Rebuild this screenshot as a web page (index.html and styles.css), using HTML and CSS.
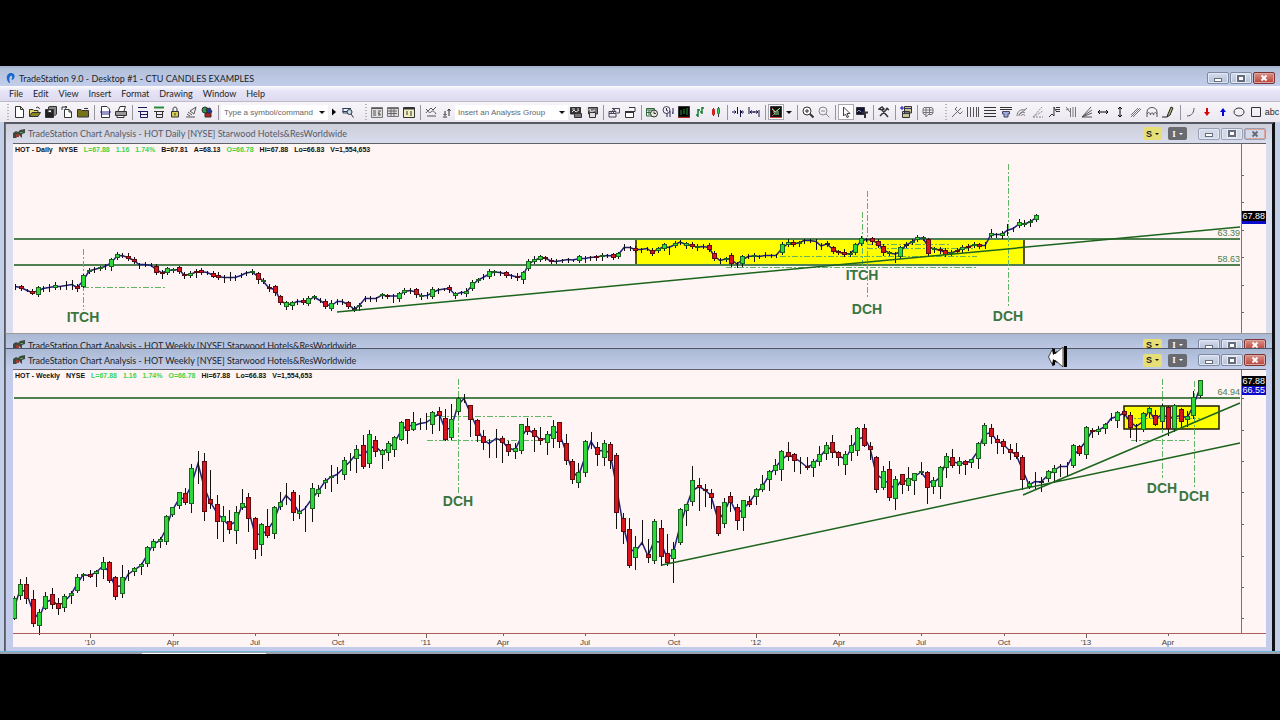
FILE: index.html
```html
<!DOCTYPE html>
<html lang="en">
<head>
    <meta charset="UTF-8">
    <meta name="viewport" content="width=device-width, initial-scale=1.0">
    <title>TradeStation 9.0 - Desktop #1 - CTU CANDLES EXAMPLES</title>
    <link rel="stylesheet" href="styles.css">
</head>
<body>
    <div class="app">
        <header class="titlebar">
            <svg class="logo" viewBox="0 0 10 12"><path d="M3 11C0 8 0 3 3 1.500C7 0 10 3 8 6.500C7 8 6 8 5.500 7.500C7 5 6 3 4.500 4C3 5 3 8 4 11Z" fill="#1668d0"/></svg>
            <h1>TradeStation 9.0 - Desktop #1 - CTU CANDLES EXAMPLES</h1>
            <div class="window-buttons">
                <button aria-label="Minimize"><i class="min"></i></button>
                <button aria-label="Maximize"><i class="max"></i></button>
                <button class="close" aria-label="Close"><svg viewBox="0 0 8 8"><path d="M1.500 1.500L6.500 6.500M6.500 1.500L1.500 6.500"/></svg></button>
            </div>
        </header>

        <nav class="menubar">
            <a href="#">File</a>
            <a href="#">Edit</a>
            <a href="#">View</a>
            <a href="#">Insert</a>
            <a href="#">Format</a>
            <a href="#">Drawing</a>
            <a href="#">Window</a>
            <a href="#">Help</a>
        </nav>

        <div class="toolbar">
            <div class="group">
                <span class="grip"></span>
                <button aria-label="New"><svg viewBox="0 0 12 12"><path d="M2.500 .5H7.500L10.500 3.500V11.500H2.500ZM7.500 .5V3.500H10.500" fill="#fff"/></svg></button>
                <button aria-label="Open"><svg viewBox="0 0 12 12"><path d="M.5 10.500V3.500H4L5 4.500H9V6" fill="#e6d860"/><path d="M.5 10.500L3 6.500H11.500L9 10.500Z" fill="#8a8420"/><path d="M7 2C8.500 .5 10 1 10.500 3"/></svg></button>
                <button aria-label="Save all"><svg viewBox="0 0 12 12"><path d="M3.500 3V1L5 .5H11.500V8L9.500 10" fill="#888"/><path d="M.5 3.500H8.500V11.500H.5Z" fill="#222"/><path d="M3 4V6.500H6.500V4Z" fill="#fff"/></svg></button>
                <button aria-label="New window"><svg viewBox="0 0 12 12"><path d="M3.500 3.500H8L10.500 6V11.500H3.500ZM8 3.500V6H10.500" fill="#fff"/><path d="M1 4V1H6M4 0L6 1L4 2.500"/></svg></button>
                <button aria-label="Close workspace"><svg viewBox="0 0 12 12"><path d="M.5 3.500H4L5 4.500H11.500V11H.5Z" fill="#77721a"/><path d="M7 2.500H11"/></svg></button>
                <span class="sep"></span>
                <button aria-label="Page setup"><svg viewBox="0 0 12 12"><path d="M2.500 .5H8L10.500 3V11.500H2.500Z" fill="#fff"/><path d="M1 6H12M2 8H11" stroke="#2a2a8a"/></svg></button>
                <button aria-label="Print"><svg viewBox="0 0 12 12"><path d="M3 5L5 .5H10.500L9 5" fill="#fff"/><path d="M.5 5.500H11.500V9.500H.5Z" fill="#999"/><path d="M2 9.500H9V11.500H2Z" fill="#fff"/></svg></button>
                <span class="sep"></span>
                <button aria-label="Insert chart"><svg viewBox="0 0 12 12"><path d="M1 1.500H10M1 5.500H11M3.500 6V11.500H10.500V6M4 8.500H10" stroke="#1a1a60"/></svg></button>
                <button aria-label="Insert grid"><svg viewBox="0 0 12 12"><path d="M1 1.500H11" stroke="#2b8c3a" stroke-width="2"/><path d="M1 5.500H11M3.500 6V11.500H9.500V6M4 8.500H9"/></svg></button>
                <button aria-label="Lock"><svg viewBox="0 0 12 12"><path d="M4 5V3C4 .5 8 .5 8 3V5"/><path d="M2.500 5.500H9.500V11H2.500Z" fill="#d9ce55"/><path d="M6 7V9.500"/></svg></button>
                <button aria-label="Format"><svg viewBox="0 0 12 12"><path d="M1 11H10M2 8L5 10M3 6L7 9M5 5L9 8L11 1Z" stroke="#555"/></svg></button>
                <button aria-label="Colors"><svg viewBox="0 0 12 12"><circle cx="4" cy="4" r="3" fill="#2c9c45"/><path d="M5 3L9 2L11 6L7 8Z" fill="#1c3aa0"/><path d="M4 7H10V11H4Z" fill="#b52020"/></svg></button>
                <span class="sep"></span>
                <div class="combo symbol">
                    <input type="text" placeholder="Type a symbol/command" aria-label="Symbol or command">
                    <i class="arrow"></i>
                </div>
                <button class="play" aria-label="Go"><svg viewBox="0 0 12 12"><path d="M4 2.500L8 6L4 9.500Z" fill="#000" stroke="none"/></svg></button>
                <button aria-label="Symbol lookup"><svg viewBox="0 0 12 12"><path d="M.5 2.500H9M.5 5.500H5M1 2V7H5" stroke="#2a3a60"/><circle cx="7.500" cy="6" r="2.500" fill="#bfe0ea"/><path d="M9 8L11.500 11.500"/></svg></button>
            </div>

            <div class="group">
                <span class="grip"></span>
                <button aria-label="Data window"><svg viewBox="0 0 12 12"><path d="M.5 1.500H11.500V11.500H.5Z" fill="#ddd" stroke="#777"/><path d="M1 2.500H11M2 5H5M2 7H5M2 9H5M7 5H10M7 7L10 9M8 10V6" stroke="#555"/></svg></button>
                <button aria-label="Time and sales"><svg viewBox="0 0 12 12"><path d="M.5 1.500H11.500V10.500H.5Z" fill="#ddd" stroke="#777"/><path d="M1 2.500H11M1 5H10M1 7.500H10M4 3V10M7 3V10" stroke="#666"/></svg></button>
                <button aria-label="Matrix"><svg viewBox="0 0 12 12"><path d="M.5 1.500H11.500V11.500H.5Z" fill="#f1efc0"/><path d="M1 2.500H11" stroke-width="2"/><path d="M3 6H5M3 8H5M8 5V10"/></svg></button>
                <span class="sep"></span>
                <button aria-label="Insert indicator"><svg viewBox="0 0 12 12"><path d="M1 3L3 5L6 2L8 4L11 1M1 7C3 3 4 8 6 6S9 5 11 8M2 10H11" stroke="#555"/></svg></button>
                <button aria-label="Sort"><svg viewBox="0 0 12 12"><path d="M4 5V9M2.500 8L4 9.500L5.500 8M8 10V3M6.500 5L8 3L9.500 5M2 11H6"/></svg></button>
                <div class="combo analysis">
                    <input type="text" placeholder="Insert an Analysis Group" aria-label="Analysis group">
                    <i class="arrow"></i>
                </div>
                <button aria-label="Save group"><svg viewBox="0 0 12 12"><path d="M.5 1.500H10.500V8H.5Z" fill="#333"/><path d="M2 3H5M7 3H9M2 6L4 4L6 6L9 4" stroke="#ddd"/><path d="M4.500 7.500H11.500V11.500H4.500Z" fill="#777"/></svg></button>
                <button aria-label="Edit group"><svg viewBox="0 0 12 12"><path d="M2.500 1.500H11.500V8H2.500Z" fill="#777"/><path d="M1 1V5L4 3L5 6L9 4" stroke="#ddd"/><path d="M3.500 6.500H9.500V11.500H3.500Z" fill="#ddd"/></svg></button>
                <span class="sep"></span>
                <button aria-label="Properties"><svg viewBox="0 0 12 12"><path d="M4 2.500H11.500V7H9M1 5.500H8V11H1ZM2 8L6 3L7 5L4 8M1 7.500H8" stroke="#445"/></svg></button>
                <button aria-label="Window properties"><svg viewBox="0 0 12 12"><path d="M5 1.500H11V5.500H9.500M1.500 5.500H9.500V11.500H1.500Z" fill="#fff"/><path d="M1 6H10" stroke-width="2"/></svg></button>
                <span class="sep"></span>
                <button aria-label="Session"><svg viewBox="0 0 12 12"><path d="M.5 2.500H8.500V10H.5ZM1 4H8M3 4V9M1 6.500H8" stroke="#2c6b3a"/><circle cx="8" cy="7.500" r="3.500" fill="#e2e8d8"/><path d="M8 5.500V7.500H10"/></svg></button>
                <button aria-label="Interval"><svg viewBox="0 0 12 12"><circle cx="4.500" cy="4" r="3.500" stroke="#445"/><path d="M4.500 2V4.500L6 5M5 7V11M8 5V11M11 2V8M10 7H11" stroke="#225"/></svg></button>
                <button aria-label="Bar style"><svg viewBox="0 0 12 12"><path d="M.5 .5H11.500V11H.5Z" fill="#000"/><path d="M3 4V9M6 3V8M9 2V9" stroke="#269a3b"/><path d="M0 11.500H12" stroke="#b22"/></svg></button>
                <button aria-label="OHLC bars"><svg viewBox="0 0 12 12"><path d="M4 3V11M2 9H4M4 4H6M8 1V8M6 6H8M8 2H10" stroke="#167c34" stroke-width="1.500"/></svg></button>
                <button aria-label="Candlesticks"><svg viewBox="0 0 12 12"><path d="M3.500 2V10" stroke="#333"/><path d="M2.500 3.500H4.500V8.500H2.500Z" fill="#d22" stroke="#c22"/><path d="M8.500 1V11" stroke="#333"/><path d="M7.500 2.500H9.500V7.500H7.500Z" fill="#3c5" stroke="#384"/></svg></button>
                <span class="sep"></span>
                <button aria-label="Decrease spacing"><svg viewBox="0 0 12 12"><path d="M0 6H4M2.500 4.500L4 6L2.500 7.500M5.500 1V8M8.500 4V11M12 6H9M10.500 4.500L9 6L10.500 7.500" stroke="#114"/></svg></button>
                <button aria-label="Increase spacing"><svg viewBox="0 0 12 12"><path d="M1 1V8M11 4V11M2 6H10M4 4.500L2 6L4 7.500M8 4.500L10 6L8 7.500M6 5V7" stroke="#114"/></svg></button>
                <span class="sep"></span>
                <button class="pressed" aria-label="Chart trading"><svg viewBox="0 0 12 12"><path d="M.5 .5H11.500V11.500H.5Z" fill="#111"/><path d="M2 2L5 5M2 10L5 7M0 11.500H12" stroke="#c44"/><path d="M2 3L5 6L9 3M3 6H9M4 8H9M10 2L7 5" stroke="#9d9"/></svg></button>
                <button class="drop" aria-label="Chart trading options"><i class="arrow"></i></button>
                <span class="sep"></span>
                <button aria-label="Zoom in"><svg viewBox="0 0 12 12"><circle cx="5" cy="5" r="4" fill="#fff"/><path d="M3 5H7M5 3V7"/><path d="M8 8L11.500 11.500" stroke-width="2"/></svg></button>
                <button aria-label="Zoom out"><svg viewBox="0 0 12 12"><circle cx="5" cy="5" r="4" stroke="#888"/><path d="M3 5H7M8 8L11.500 11.500" stroke="#888"/></svg></button>
                <span class="sep"></span>
                <button class="pressed" aria-label="Pointer"><svg viewBox="0 0 12 12"><path d="M3.500 1V10L5.500 8L7 11.500L8.500 11L7 7.500H10Z" fill="#fff" stroke="#444"/></svg></button>
                <button aria-label="Text tool"><svg viewBox="0 0 12 12"><path d="M.5 1.500H8.500V8.500H.5Z" fill="#113"/><path d="M1 6L3 4L5 6" stroke="#99c"/><path d="M6 6.500H12M9 6.500V11.500M8 11.500H10" stroke-width="2"/></svg></button>
                <span class="sep"></span>
                <button aria-label="Tools"><svg viewBox="0 0 12 12"><path d="M1 3L4 1L6 3L4 4ZM4 4L10 11M10 2L2 10M8 2L11 4" stroke-width="1.500"/></svg></button>
                <span class="sep"></span>
                <button aria-label="Add to group"><svg viewBox="0 0 12 12"><path d="M4.500 .5H11.500V7H4.500ZM2.500 5.500H9.500V11.500H2.500Z" fill="#c9c49a"/><path d="M5 2.500H11M3 7.500H9" stroke="#336"/><path d="M0 2H4M2 0V4" stroke="#11b"/></svg></button>
                <span class="sep"></span>
                <button aria-label="Notes"><svg viewBox="0 0 12 12"><path d="M2 1.500H10L11 3V7L10 8.500H6L4 11V8.500H2L1 7V3ZM1 4H11M1 6.500H11M4 2V8M7.500 2V8" stroke="#777"/></svg></button>
            </div>

            <div class="group drawing">
                <span class="grip"></span>
                <button aria-label="Pitchfork"><svg viewBox="0 0 12 12"><path d="M1 11L6 6M4 3L9 8M4 3L6 1M6.500 5.500L10 2M9 8L11.500 5.500" stroke="#666"/></svg></button>
                <button aria-label="Time lines"><svg viewBox="0 0 12 12"><path d="M.5 1V11M3.500 1V11M6.500 1V11M9.500 1V11M11.500 1V11" stroke="#555"/></svg></button>
                <button aria-label="Price lines"><svg viewBox="0 0 12 12"><path d="M0 1.500H12M0 4.500H12M0 7.500H12M0 10.500H12" stroke="#333"/></svg></button>
                <button aria-label="Retracement"><svg viewBox="0 0 12 12"><path d="M0 1.500H12M0 3.500H12"/><path d="M2.500 5.500H9.500V8H8V11H4V8H2.500Z" fill="#99a8d8" stroke="#446"/></svg></button>
                <button aria-label="Speed arcs"><svg viewBox="0 0 12 12"><path d="M1 10C1 5 5 3 9 4M3 10C3 7 6 5 9 7M5 10C6 8 8 8 9 10M3 9L11 2" stroke="#777"/></svg></button>
                <button aria-label="Speed fan"><svg viewBox="0 0 12 12"><path d="M1 11L10 1M1 11L11 5M1 11H11" stroke="#888" stroke-dasharray="2 1"/></svg></button>
                <button aria-label="Extension"><svg viewBox="0 0 12 12"><path d="M0 11L3 8L5 10V1L7 5M7 1.500H11M7 3.500H11M7 5.500H11" stroke="#333"/></svg></button>
                <button aria-label="Time extension"><svg viewBox="0 0 12 12"><path d="M1 1L5 6M5.500 2V11M8 1V11M10.500 1V11M1 4L4 3" stroke="#777"/></svg></button>
                <button aria-label="Gann fan"><svg viewBox="0 0 12 12"><path d="M1 11L10 1M1 11L11 4M1 11L11 7M1 11H11" stroke="#555"/></svg></button>
                <button aria-label="Horizontal line"><svg viewBox="0 0 12 12"><path d="M1 6H11M3 4L1 6L3 8M9 4L11 6L9 8" stroke="#000"/></svg></button>
                <button aria-label="Vertical line"><svg viewBox="0 0 12 12"><path d="M6 1V11M4 3L6 1L8 3M4 9L6 11L8 9" stroke="#000"/></svg></button>
                <button aria-label="Parallel lines"><svg viewBox="0 0 12 12"><path d="M1 9L8 2M3 11L11 3M1 11L10 2" stroke="#777"/></svg></button>
                <button aria-label="Cycle arcs"><svg viewBox="0 0 12 12"><path d="M1 11V6C1 0 11 0 11 6V11M1 8C2 6 4 6 4.500 9C5 6 7 6 7.500 9C8 6 10 6 11 8" stroke="#555"/></svg></button>
                <button aria-label="Pencil"><svg viewBox="0 0 12 12"><path d="M0 11H5L6 8L9 1L11 2L8 9L5 11" fill="#b5b26a" stroke="#222"/></svg></button>
                <span class="sep"></span>
                <button aria-label="Arc"><svg viewBox="0 0 12 12"><path d="M2 10C7 10 9 6 9 2" stroke="#555"/></svg></button>
                <button aria-label="Down arrow"><svg viewBox="0 0 12 12"><path d="M5 2H7V6H9L6 10L3 6H5Z" fill="#d00" stroke="none"/></svg></button>
                <button aria-label="Up arrow"><svg viewBox="0 0 12 12"><path d="M5 10H7V6H9L6 2L3 6H5Z" fill="#00d" stroke="none"/></svg></button>
                <button aria-label="Ellipse"><svg viewBox="0 0 12 12"><ellipse cx="6" cy="6" rx="5" ry="4"/></svg></button>
                <button aria-label="Rectangle"><svg viewBox="0 0 12 12"><path d="M1.500 1.500H10.500V10.500H1.500Z"/></svg></button>
                <button class="abc">abc</button>
            </div>
        </div>

        <main class="desktop">
            <section class="chart-window inactive">
                <div class="chart-title">
                    <svg class="chart-icon" viewBox="0 0 12 10"><path d="M0 9V4L3 2L5 3L7 1L12 0V4L9 5V9L6 6L3 9Z" fill="#3d4a3d"/><path d="M3 5H6V8H3Z" fill="#9c3a30"/><path d="M7 3H10V4H7Z" fill="#5c9a5c"/></svg>
                    <h2>TradeStation Chart Analysis - HOT Daily [NYSE] Starwood Hotels&amp;ResWorldwide</h2>
                    <button class="tag-s">S <i class="arrow"></i></button>
                    <button class="tag-i">I <i class="arrow"></i></button>
                    <div class="window-buttons">
                        <button aria-label="Minimize"><i class="min"></i></button>
                        <button aria-label="Maximize"><i class="max"></i></button>
                        <button class="close" aria-label="Close"><svg viewBox="0 0 8 8"><path d="M1.500 1.500L6.500 6.500M6.500 1.500L1.500 6.500"/></svg></button>
                    </div>
                </div>
                <div class="chart">
                    <p class="quote"><span>HOT - Daily</span><span>NYSE</span><span class="up">L=67.88</span><span class="up">1.16</span><span class="up">1.74%</span><span>B=67.81</span><span>A=68.13</span><span class="up">O=66.78</span><span>Hi=67.88</span><span>Lo=66.83</span><span>V=1,554,653</span></p>
                    <svg viewBox="13 0 1253 189">
                        <rect class="range" x="636" y="95" width="388" height="26"/>
                        <path class="level" d="M14 95H1240M14 121H1240"/>
                        <path class="guide" d="M83.500 105V166M83 143.500H167M862.500 68V122M867.500 47V155M1008.500 20V162M726 123.500H977M780 112.500H977M867 100.500H950M867 104.500H975"/>
                        <g id="daily"></g>
                        <path class="trend" d="M337 168L1240 83"/>
                        <path class="axis" d="M1241.500 0V189"/>
                        <path class="tick" d="M1242 31.500h2M1242 58.500h2M1242 86.500h2M1242 113.500h2M1242 141.500h2M1242 168.500h2"/>
                        <text class="level-price" x="1240" y="92">63.39</text>
                        <text class="level-price" x="1240" y="118">58.63</text>
                        <rect class="last" x="1242" y="67" width="24" height="10"/>
                        <rect class="average" x="1242" y="77" width="24" height="3"/>
                        <text class="price" x="1265" y="75">67.88</text>
                        <text class="note" x="83" y="178">ITCH</text>
                        <text class="note" x="862" y="136">ITCH</text>
                        <text class="note" x="867" y="170">DCH</text>
                        <text class="note" x="1008" y="177">DCH</text>
                    </svg>
                </div>
            </section>

            <section class="chart-window behind">
                <div class="chart-title">
                    <svg class="chart-icon" viewBox="0 0 12 10"><path d="M0 9V4L3 2L5 3L7 1L12 0V4L9 5V9L6 6L3 9Z" fill="#3d4a3d"/><path d="M3 5H6V8H3Z" fill="#9c3a30"/><path d="M7 3H10V4H7Z" fill="#5c9a5c"/></svg>
                    <h2>TradeStation Chart Analysis - HOT Weekly [NYSE] Starwood Hotels&amp;ResWorldwide</h2>
                    <button class="tag-s">S <i class="arrow"></i></button>
                    <button class="tag-i">I <i class="arrow"></i></button>
                    <div class="window-buttons">
                        <button aria-label="Minimize"><i class="min"></i></button>
                        <button aria-label="Maximize"><i class="max"></i></button>
                        <button class="close" aria-label="Close"><svg viewBox="0 0 8 8"><path d="M1.500 1.500L6.500 6.500M6.500 1.500L1.500 6.500"/></svg></button>
                    </div>
                </div>
            </section>

            <section class="chart-window active">
                <div class="chart-title">
                    <svg class="chart-icon" viewBox="0 0 12 10"><path d="M0 9V4L3 2L5 3L7 1L12 0V4L9 5V9L6 6L3 9Z" fill="#3d4a3d"/><path d="M3 5H6V8H3Z" fill="#9c3a30"/><path d="M7 3H10V4H7Z" fill="#5c9a5c"/></svg>
                    <h2>TradeStation Chart Analysis - HOT Weekly [NYSE] Starwood Hotels&amp;ResWorldwide</h2>
                    <button class="tag-s">S <i class="arrow"></i></button>
                    <button class="tag-i">I <i class="arrow"></i></button>
                    <div class="window-buttons">
                        <button aria-label="Minimize"><i class="min"></i></button>
                        <button aria-label="Maximize"><i class="max"></i></button>
                        <button class="close" aria-label="Close"><svg viewBox="0 0 8 8"><path d="M1.500 1.500L6.500 6.500M6.500 1.500L1.500 6.500"/></svg></button>
                    </div>
                </div>
                <svg class="cursor" viewBox="0 0 22 22"><path d="M1.500 11L5 4L8 8L16 1V21L8 14L5 18Z" fill="#fff" stroke="#444"/><path d="M5 2L8 3V6L11 5L6 9ZM5 20L8 19V16L11 17L6 13ZM17 0H20V21H17Z" fill="#000"/></svg>
                <div class="chart">
                    <p class="quote"><span>HOT - Weekly</span><span>NYSE</span><span class="up">L=67.88</span><span class="up">1.16</span><span class="up">1.74%</span><span class="up">O=66.78</span><span>Hi=67.88</span><span>Lo=66.83</span><span>V=1,554,653</span></p>
                    <svg viewBox="13 0 1253 277">
                        <rect class="range" x="1124" y="36" width="95" height="23"/>
                        <path class="level" d="M14 28H1240"/>
                        <path class="guide" d="M458.500 9V123M427 46.500H552M427 70.500H541M1162.500 9V108M1194.500 11V118M1131 70.500H1190M1126 48.500H1200"/>
                        <g id="weekly"></g>
                        <path class="trend" d="M662 195L1240 73M1023 125L1240 33"/>
                        <path class="axis" d="M1241.500 0V264M13 263.500H1266"/>
                        <path class="tick" d="M1242 28.500h2M1242 60.500h2M1242 91.500h2M1242 122.500h2M1242 154.500h2M1242 186.500h2M1242 217.500h2M1242 248.500h2"/>
                        <text class="level-price" x="1240" y="25">64.94</text>
                        <rect class="last" x="1242" y="6" width="24" height="10"/>
                        <rect class="average" x="1242" y="16" width="24" height="9"/>
                        <text class="price" x="1265" y="14">67.88</text>
                        <text class="price" x="1265" y="23">66.55</text>
                        <text class="note" x="458" y="136">DCH</text>
                        <text class="note" x="1162" y="123">DCH</text>
                        <text class="note" x="1194" y="131">DCH</text>
                        <g id="months"></g>
                    </svg>
                </div>
            </section>
        </main>
        <div class="tabs"><span></span></div>
    </div>
    <script src="charts.js"></script>
</body>
</html>
```
FILE: styles.css
```css
* {
    box-sizing: border-box;
}

body {
    margin: 0;
    padding: 66px 0;
    background: #000;
    font-family: Lato, "Open Sans", sans-serif;
    font-size: 9px;
    color: #1c1f28;
}

h1, h2, p {
    margin: 0;
    font-size: inherit;
    font-weight: normal;
    white-space: nowrap;
}

button {
    padding: 0;
    border: none;
    background: none;
    font: inherit;
    color: inherit;
}

.app {
    background: #c2cfe6;
    overflow: hidden;
}

/* title bar and menu */
.titlebar {
    display: flex;
    align-items: center;
    gap: 3px;
    height: 20px;
    padding: 4px 5px 0 6px;
    background: linear-gradient(#9fb0c8, #b4c1da 3px, #c2cdeb);
}

.logo {
    width: 10px;
    height: 12px;
}

.window-buttons {
    display: flex;
    gap: 1px;
    margin-left: auto;
}

.window-buttons button {
    display: flex;
    align-items: center;
    justify-content: center;
    width: 22px;
    height: 12px;
    border: 1px solid #7d88a2;
    border-radius: 2px;
    background: linear-gradient(#d5dcec, #b3c0d8);
    box-shadow: inset 0 0 0 1px #e2e8f4;
}

.window-buttons .close {
    border-color: #7c3434;
    background: linear-gradient(#d99087, #b9443a);
    box-shadow: inset 0 0 0 1px #dba59d;
}

.window-buttons svg {
    width: 8px;
    height: 8px;
    stroke: #fff;
    stroke-width: 2;
}

.min, .max {
    width: 8px;
    height: 4px;
    border: 1px solid #666c7c;
    background: #fff;
}

.min {
    margin-top: 3px;
}

.max {
    height: 7px;
    border-width: 2px;
    outline: 1px solid #e8ecf4;
}

.menubar {
    display: flex;
    align-items: center;
    gap: 10px;
    height: 15px;
    padding-left: 9px;
    background: linear-gradient(#fbfbff, #e6e4f6 5px, #dedbef);
}

.menubar a {
    color: inherit;
    text-decoration: none;
}

/* toolbar */
.toolbar {
    display: flex;
    gap: 7px;
    height: 21px;
    padding-left: 5px;
    border-top: 1px solid #bdb9c6;
    background: linear-gradient(#f7f5fa, #ebe7f0);
    overflow: hidden;
}

.group {
    display: flex;
    align-items: center;
    flex: none;
}

.drawing {
    flex: 1;
    justify-content: space-between;
}

.group button {
    display: flex;
    align-items: center;
    justify-content: center;
    width: 16px;
    height: 16px;
}

.group svg {
    width: 12px;
    height: 12px;
    fill: none;
    stroke: #333;
}

.grip {
    width: 2px;
    height: 16px;
    margin: 0 2px;
    background: repeating-linear-gradient(#b5b2bd 0 1px, transparent 1px 3px);
}

.sep {
    width: 1px;
    height: 15px;
    margin: 0 2px 0 3px;
    background: #97949f;
}

.combo {
    display: flex;
    align-items: center;
    height: 15px;
    padding: 0 3px;
    background: #fff;
}

.combo input {
    flex: 1;
    min-width: 0;
    padding: 0;
    border: none;
    outline: none;
    background: none;
    font: 8px "Liberation Sans", Arial, sans-serif;
}

.combo input::placeholder {
    color: #666;
    opacity: 1;
}

.symbol {
    width: 107px;
}

.analysis {
    width: 113px;
}

.arrow {
    border: 3px solid transparent;
    border-top-color: #111;
    border-bottom: none;
}

.group .play {
    width: 12px;
}

.group .drop {
    width: 10px;
}

.group .pressed {
    border: 1px solid #aaa7b2;
    background: #fff;
}

.group .abc {
    font-family: "Liberation Sans", Arial, sans-serif;
}

/* chart windows */
.desktop {
    margin: 0 5px 0 4px;
    border-top: 2px solid #555963;
    border-left: 1px solid #555963;
    border-right: 3px solid #101114;
}

.chart-window {
    position: relative;
    padding: 0 6px 0 7px;
    border-left: 1px solid #6b7080;
    background: #d3dbec;
}

.chart-title {
    display: flex;
    align-items: center;
    height: 20px;
    border-bottom: 1px solid #5f6269;
}

.chart-icon {
    width: 12px;
    height: 10px;
    margin-right: 3px;
}

.chart-title h2 {
    flex: 1;
}

.chart-title .window-buttons {
    margin-left: 11px;
}

.inactive {
    background: linear-gradient(#cdced9, #d9dded 20px);
}

.inactive h2 {
    color: #545967;
}

.inactive .window-buttons button {
    border-color: #9aa0b4;
    background: #d3d9e7;
}

.inactive .close svg {
    stroke: #666c7c;
}

.active, .behind {
    background: linear-gradient(#aab9d3, #c3cdeb 20px);
}

.behind {
    height: 15px;
    border-top: 1px solid #9c9a96;
    overflow: hidden;
}

.behind .chart-title {
    height: 23px;
}

.active {
    padding-bottom: 4px;
    border-top: 1px solid #4c5466;
}

.active .chart-title {
    height: 21px;
    padding-top: 2px;
}

.tag-s, .tag-i {
    display: flex;
    align-items: center;
    justify-content: center;
    gap: 3px;
    width: 19px;
    height: 13px;
    border-radius: 2px;
    background: #e6df78;
    font: bold 9px "Liberation Sans", Arial, sans-serif;
}

.chart-title .tag-i {
    margin-left: 6px;
    background: #686a70;
    color: #fff;
    font-family: "Liberation Serif", serif;
}

.tag-s .arrow, .tag-i .arrow {
    border-width: 2px;
    border-bottom: none;
}

.tag-i .arrow {
    border-top-color: #fff;
}

.cursor {
    position: absolute;
    top: -3px;
    right: 203px;
    width: 22px;
    height: 22px;
}

.chart {
    position: relative;
    background: #fef5f4;
}

.chart > svg {
    display: block;
    width: 100%;
}

.quote {
    position: absolute;
    top: 1px;
    left: 2px;
    display: flex;
    gap: 6px;
    font: bold 7px/10px "Liberation Sans", Arial, sans-serif;
    color: #111;
}

.quote .up {
    color: #3fd44a;
}

/* drawing inside the charts */
.range {
    fill: #ff0;
    stroke: #1c1c00;
    stroke-width: 1.5;
}

.level {
    stroke: #4f8050;
    stroke-width: 2;
}

.trend {
    fill: none;
    stroke: #1c641c;
    stroke-width: 1.5;
}

.guide {
    fill: none;
    stroke: #62b562;
    stroke-dasharray: 6 2 2 2;
}

.axis {
    fill: none;
    stroke: #a8605f;
}

.tick {
    stroke: #77605f;
}

.average-line {
    fill: none;
    stroke: #20207c;
    stroke-width: 1.5;
}

.wick {
    stroke: #111;
}

.candle {
    stroke: #222;
}

.candle.g {
    fill: #2fd83a;
    stroke: #1c611f;
}

.candle.r {
    fill: #d8141c;
    stroke: #5c0c10;
}

.candle.k {
    fill: #111;
}

.note {
    font: bold 14px "Liberation Sans", Arial, sans-serif;
    fill: #3a7541;
    text-anchor: middle;
}

.level-price, .price {
    font: 9px "Liberation Sans", Arial, sans-serif;
    fill: #4c7c4c;
    text-anchor: end;
}

.price {
    fill: #fff;
}

.last {
    fill: #000;
}

.average {
    fill: #0a0ac8;
}

.month {
    font: 8px "Liberation Sans", Arial, sans-serif;
    fill: #444;
    text-anchor: middle;
}

.tabs {
    display: flex;
    height: 3px;
    border-top: 1px solid #74b4d8;
    background: #9aa3ae;
}

.tabs span {
    width: 124px;
    margin: 1px 0 0 142px;
    background: #fff;
}
```
FILE: charts.js
```js
// each bar: colour (g up, r down, k doji), high, body top, body bottom, low
const daily = `
r140,142,143,145 r141,142,145,146 k145,146,147,147 r145,147,150,150 g142,143,151,152 k142,144,145,147
k140,143,144,147 g138,141,144,145 k142,142,143,145 k137,141,142,145 k136,140,141,145 r140,142,145,147
g130,131,143,143 g124,126,128,129 k123,125,126,128 g122,123,125,126 r120,122,123,125 g114,115,123,126
g108,110,114,115 k109,111,112,113 r109,112,115,116 r113,115,118,119 k119,120,121,124 k118,120,121,122
k119,121,122,122 r120,122,129,130 r126,128,130,134 g123,124,129,130 g124,125,127,128 r122,123,128,129
r128,130,132,134 g127,129,132,133 r125,127,129,133 r124,126,129,130 k127,128,129,130 r127,129,133,133
r128,131,134,135 k131,133,134,138 k128,133,134,136 k131,133,134,136 k129,131,132,133 g127,129,129,131
g125,127,129,130 r128,129,136,139 g134,136,138,139 r140,143,145,147 r141,142,149,151 r151,152,159,160
g157,158,163,165 g157,158,162,165 r155,157,158,160 r154,156,159,160 g152,154,160,161 g151,152,154,155
r154,156,157,158 r155,157,163,164 g156,159,165,166 k155,157,158,160 k155,157,158,160 r157,158,163,164
k162,164,166,167 g159,161,163,166 g152,154,155,157 k152,154,155,157 k153,154,155,157 g149,150,152,154
r150,151,153,154 k150,152,152,158 g148,149,155,157 g144,146,149,150 k144,146,147,149 r144,145,151,153
g149,151,153,155 k148,151,152,154 g143,145,153,154 k144,146,146,149 k144,145,145,146 r141,143,146,148
g148,149,152,154 k147,148,149,150 g144,147,150,152 g136,138,145,146 g134,135,137,138 k130,133,134,135
g125,127,133,134 g126,127,129,131 k127,128,129,131 r127,128,132,133 k130,131,132,134 r129,132,134,136
g127,128,136,139 g115,117,125,126 g112,115,118,119 g111,112,116,117 r112,113,115,116 r114,116,118,119
k115,117,118,119 k115,116,117,118 r114,115,116,118 k115,116,116,117 g111,112,117,118 k112,114,115,118
k112,113,114,116 r111,112,114,116 g109,111,113,116 k110,111,112,113 r109,110,114,115 g108,109,113,114
g100,103,104,106 k102,103,104,106 r102,104,107,108 k104,105,106,108 k103,104,105,106 r104,106,110,111
g103,104,107,108 g99,100,105,106 k102,103,104,110 g97,99,102,103 k96,98,98,100 g98,99,102,104
r98,100,103,104 g100,102,104,106 k100,102,103,104 r99,101,106,107 r107,109,115,116 r114,116,117,119
g113,114,116,117 r109,111,120,122 k118,120,120,123 g111,112,120,122 k110,112,113,114 g109,111,113,117
k111,112,113,114 k108,111,112,113 k110,111,112,113 k110,111,112,113 g98,100,109,110 g95,98,101,102
r96,98,101,102 g97,98,100,102 k95,96,97,99 k95,96,97,98 k95,97,98,105 k99,102,102,105
k97,99,101,102 r102,103,108,109 r106,107,109,110 r105,108,111,112 g107,109,111,112 g99,100,109,110
g92,94,100,101 k94,95,96,97 r93,94,98,100 r95,97,102,103 r100,102,109,111 g107,108,110,111
k108,110,110,118 g102,103,113,114 k98,100,102,103 g95,97,99,100 g91,93,96,97 g92,93,95,96
r94,95,110,111 g103,104,106,108 r103,105,107,109 r104,106,111,112 g106,108,110,111 r104,106,108,109
g101,103,106,108 r100,102,104,106 g98,100,102,103 r99,100,103,104 g98,101,102,104 g85,89,92,93
k89,90,91,93 g87,89,92,94 k80,86,87,91 k83,84,85,87 g75,78,82,83 g76,79,81,82
g75,77,79,82 g70,71,76,77`;

const weekly = `
g226,228,249,249 g209,214,226,229 r207,214,229,233 r220,229,254,256 g239,242,256,264 g222,226,239,239
r218,224,235,238 r228,233,239,244 g224,226,238,241 g221,223,226,233 g204,207,221,222 g203,204,206,210
r200,204,207,207 g200,201,204,216 g187,192,200,208 r191,192,211,212 r206,207,227,229 g195,207,224,227
k200,204,205,210 g197,198,202,205 g193,194,197,204 g176,177,194,196 g169,171,178,180 g167,169,172,177
g145,146,172,174 g137,137,145,146 g122,122,136,138 r118,123,133,134 g94,98,134,142 r81,93,94,113
r83,91,142,150 r100,129,134,138 r125,134,152,168 g136,146,152,171 r140,151,160,163 g136,142,161,173
g119,133,138,139 r123,127,149,161 r147,148,180,188 g153,154,175,185 r139,156,166,167 g136,137,164,168
g122,132,137,139 k113,125,126,134 r120,122,143,150 g125,141,144,148 k136,138,139,161 g113,118,139,151
g115,119,124,126 g108,110,113,118 g95,106,108,121 k97,104,105,113 g87,90,105,109 k83,91,92,100
g75,79,89,102 r65,75,97,98 g60,64,94,97 r66,70,82,86 g79,80,85,98 g71,73,83,90
g66,67,80,86 g51,52,70,70 r49,49,61,73 g42,52,60,60 k48,53,54,59 k43,52,53,59
g41,42,55,63 r37,41,46,60 r39,48,70,70 g34,49,68,69 g27,28,42,44 k24,28,29,32
r35,35,50,66 r49,50,66,71 r60,66,73,79 k69,73,74,87 k59,68,69,87 r66,68,73,92
r71,74,82,85 g73,78,82,88 g54,54,81,83 r48,56,62,64 r58,60,67,81 r57,68,71,74
g61,64,73,84 g50,56,69,77 r52,52,72,77 r64,73,91,94 r89,91,110,113 g93,102,113,117
g70,71,103,106 k62,71,72,78 r72,77,85,95 g70,73,88,95 r72,74,91,98 r83,85,143,158
r143,148,162,173 r148,159,196,197 g166,177,188,199 k150,172,173,174 r169,184,188,192 g149,151,191,193
r150,158,187,195 r164,183,193,195 g172,179,189,212 g138,139,173,174 g134,134,141,155 g96,110,132,135
r108,115,118,140 r114,119,121,136 r119,123,128,138 r136,136,164,165 g128,132,154,157 r122,126,133,141
r134,137,151,159 g130,130,148,160 r126,131,135,136 g118,119,127,134 g105,114,120,121 g100,101,110,120
g89,95,101,104 g80,81,100,110 r72,82,87,90 r83,84,91,101 k87,91,92,103 r87,96,98,99
g89,91,98,106 g76,84,92,95 g72,75,84,89 r65,72,83,87 r81,82,88,95 g81,84,95,104
g65,75,83,90 g57,58,81,85 r54,58,76,76 r72,76,80,89 r86,87,120,122 g96,101,118,119
r91,99,128,130 g106,109,129,139 r104,104,115,123 g97,108,116,120 g103,103,111,124 g92,101,103,104
r101,102,118,133 g107,110,117,123 g96,97,117,128 g83,86,98,107 r79,87,96,97 g87,91,96,103
r90,91,95,104 g89,89,93,97 g72,73,89,98 g53,55,74,75 r54,58,67,73 r65,69,73,83
r69,71,77,83 r74,79,83,89 r73,82,87,88 r85,87,110,119 g111,113,117,118 k102,111,112,118
k107,111,113,121 g100,101,109,111 g95,98,103,112 k94,96,97,106 k92,96,97,106 g74,75,96,97
r75,76,84,85 g56,57,85,88 r58,60,62,67 g56,59,62,64 g53,54,59,63 k43,48,49,50
g41,42,51,57 r40,41,45,46 r42,45,58,67 k54,56,57,71 g42,43,60,61 g37,38,43,47
r40,45,55,55 g34,36,52,58 r36,37,59,65 g34,35,59,61 r38,39,52,57 g41,46,50,56
g21,27,46,48 g10,10,26,27`;

function drawBars(id, data, start, step) {
    const bars = data.trim().split(/\s+/);
    let candles = '';
    const points = [];

    bars.forEach((bar, i) => {
        const color = bar[0];
        const [high, top, bottom, low] = bar.slice(1).split(',').map(Number);
        const x = Math.round(start + i * step);
        points.push(x + ',' + (top + bottom) / 2);
        candles += `<path class="wick" d="M${x + 0.5} ${high}V${low + 1}"/>`;
        candles += `<rect class="candle ${color}" x="${x - 1.5}" y="${top + 0.5}" width="4" height="${Math.max(bottom - top - 1, 0)}"/>`;
    });

    document.getElementById(id).innerHTML =
        `<polyline class="average-line" points="${points.join(' ')}"/>` + candles;
}

drawBars('daily', daily, 15.3, 5.637);
drawBars('weekly', weekly, 13.7, 6.343);

const months = [
    ["'10", 90], ['Apr', 173], ['Jul', 255], ['Oct', 338],
    ["'11", 426], ['Apr', 503], ['Jul', 585], ['Oct', 674],
    ["'12", 756], ['Apr', 839], ['Jul', 921], ['Oct', 1004],
    ["'13", 1086], ['Apr', 1168]
];

document.getElementById('months').innerHTML = months.map(([name, x]) =>
    `<path class="tick" d="M${x + 0.5} 264v${name[0] === "'" ? 4 : 2}"/><text class="month" x="${x}" y="275">${name}</text>`
).join('');
```
